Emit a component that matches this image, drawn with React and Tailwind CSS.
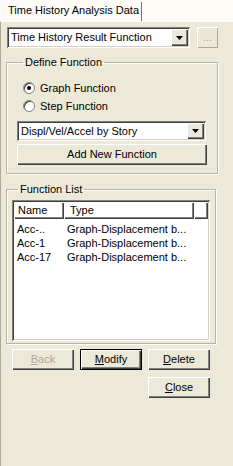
const raised =
  "shadow-[inset_1px_1px_0_#ffffff,inset_-1px_-1px_0_#404040,inset_-2px_-2px_0_#808080]";
const sunken =
  "shadow-[inset_1px_1px_0_#808080,inset_-1px_-1px_0_#ffffff,inset_2px_2px_0_#404040,inset_-2px_-2px_0_#d4d0c8]";

function Arrow() {
  return (
    <div
      className={`w-[17px] h-full bg-[#ece9d8] flex items-center justify-center ${raised}`}
    >
      <svg width="7" height="4" viewBox="0 0 7 4">
        <path d="M0 0h7L3.5 4z" fill="#000" />
      </svg>
    </div>
  );
}

function Combo({ text, className }) {
  return (
    <div className={`flex items-stretch bg-white p-[2px] ${sunken} ${className}`}>
      <div className="flex-1 flex items-center pl-[2px] text-black">{text}</div>
      <Arrow />
    </div>
  );
}

function Radio({ checked, label }) {
  return (
    <div className="flex items-center h-[18px]">
      <div
        className={`w-[12px] h-[12px] rounded-full bg-white border border-[#808080] flex items-center justify-center shadow-[inset_1px_1px_0_#404040]`}
      >
        {checked && <div className="w-[4px] h-[4px] rounded-full bg-black" />}
      </div>
      <span className="ml-[5px]">{label}</span>
    </div>
  );
}

function Btn({ children, disabled, def, className = "" }) {
  return (
    <div
      className={`h-[21px] flex items-center justify-center bg-[#ece9d8] ${
        def ? "border border-black shadow-[inset_1px_1px_0_#ffffff,inset_-1px_-1px_0_#404040,inset_-2px_-2px_0_#808080]" : raised
      } ${disabled ? "text-[#aca899]" : "text-black"} ${className}`}
    >
      {children}
    </div>
  );
}

const rows = [
  ["Acc-..", "Graph-Displacement b..."],
  ["Acc-1", "Graph-Displacement b..."],
  ["Acc-17", "Graph-Displacement b..."],
];

export default function App() {
  return (
    <div
      className="w-[233px] h-[466px] flex flex-col bg-[#fcfbf6] text-[11px] leading-[13px] text-black overflow-hidden"
      style={{ fontFamily: '"Liberation Sans", Arial, sans-serif' }}
    >
      {/* tab strip */}
      <div className="h-[21px] flex shrink-0">
        <div className="w-[142px] border-r border-[#6f6f6f] mt-[2px] pl-[8px] pt-[2px]">
          Time History Analysis Data
        </div>
      </div>

      {/* panel */}
      <div className="flex-1 bg-[#ece9d8] border-l border-[#aca899] border-t border-t-white pl-[5px] pt-[5px]">
        <div className="flex items-center">
          <Combo text="Time History Result Function" className="w-[183px] h-[21px] ml-px" />
          <div className="ml-[7px] w-[21px] h-[21px] flex items-center justify-center text-[#aca899] shadow-[inset_1px_1px_0_#ffffff,inset_-1px_-1px_0_#aca899]">
            ...
          </div>
        </div>

        <fieldset className="mt-[8px] w-[210px] border border-[#b8b4a2] shadow-[1px_1px_0_#ffffff,inset_1px_1px_0_#ffffff] px-[10px] pb-[8px]">
          <legend className="ml-[6px] px-[2px]">Define Function</legend>
          <div className="ml-[6px] mt-[10px]">
            <Radio checked label="Graph Function" />
            <Radio label="Step Function" />
          </div>
          <Combo text="Displ/Vel/Accel by Story" className="mt-[6px] h-[20px] w-[189px]" />
          <Btn className="mt-[3px] w-[190px] h-[20px]">Add New Function</Btn>
        </fieldset>

        <fieldset className="mt-[9px] w-[210px] border border-[#b8b4a2] shadow-[1px_1px_0_#ffffff,inset_1px_1px_0_#ffffff] px-[5px] pb-[2px]">
          <legend className="ml-[6px] px-[2px]">Function List</legend>
          <div className={`mt-[4px] h-[141px] bg-white p-[2px] ${sunken}`}>
            <div className="flex h-[17px]">
              <div className={`w-[50px] pl-[4px] flex items-center ${raised}`}>Name</div>
              <div className={`w-[130px] pl-[6px] flex items-center ${raised}`}>Type</div>
              <div className={`flex-1 ${raised}`} />
            </div>
            <div className="pt-[3px]">
              {rows.map(([n, t]) => (
                <div key={n} className="flex h-[14px] items-center">
                  <div className="w-[53px] pl-[3px]">{n}</div>
                  <div>{t}</div>
                </div>
              ))}
            </div>
          </div>
        </fieldset>

        <div className="mt-[5px] ml-[6px] flex gap-[6px]">
          <Btn disabled className="w-[62px]">
            <span><u>B</u>ack</span>
          </Btn>
          <Btn def className="w-[62px]">
            <span><u>M</u>odify</span>
          </Btn>
          <Btn className="w-[62px]">
            <span><u>D</u>elete</span>
          </Btn>
        </div>
        <div className="mt-[7px] ml-[142px]">
          <Btn className="w-[62px]">
            <span><u>C</u>lose</span>
          </Btn>
        </div>
      </div>
    </div>
  );
}
